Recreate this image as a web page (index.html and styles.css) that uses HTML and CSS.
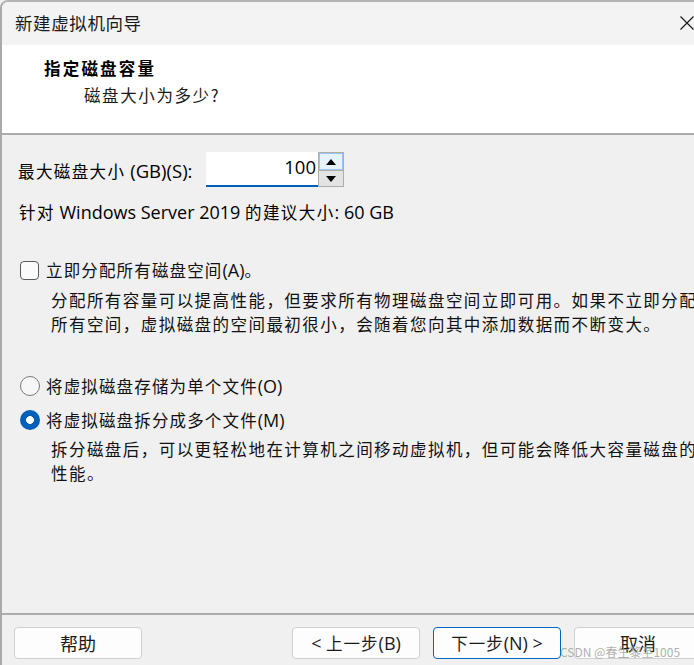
FILE: index.html
```html
<!DOCTYPE html>
<html lang="zh-CN">
<head>
<meta charset="utf-8">
<title>新建虚拟机向导</title>
<link rel="stylesheet" href="styles.css">
</head>
<body>
<div class="window">
  <div class="titlebar">
    <span class="title">新建虚拟机向导</span>
    <svg class="close" width="14" height="14" viewBox="0 0 14 14"><path d="M0.5 0.5 L13.5 13.5 M13.5 0.5 L0.5 13.5" stroke="#1a1a1a" stroke-width="1.2" fill="none"/></svg>
  </div>
  <div class="header">
    <div class="h-title">指定磁盘容量</div>
    <div class="h-sub">磁盘大小为多少?</div>
  </div>
  <div class="content">
    <div class="size-row">
      <span class="size-label"><span class="c">最大磁盘大小</span> (GB)(S):</span>
      <div class="spin">
        <div class="spin-input">100</div>
        <div class="spin-btns">
          <div class="spin-btn up"><svg width="10" height="6" viewBox="0 0 10 6"><path d="M5 0 L10 6 L0 6 Z" fill="#000"/></svg></div>
          <div class="spin-btn down"><svg width="10" height="6" viewBox="0 0 10 6"><path d="M0 0 L10 0 L5 6 Z" fill="#000"/></svg></div>
        </div>
      </div>
    </div>
    <div class="recommend"><span class="c">针对</span> Windows Server 2019 <span class="c">的建议大小</span>: 60 GB</div>
    <div class="check-row">
      <span class="checkbox"></span>
      <span class="opt-label"><span class="c">立即分配所有磁盘空间</span>(A)<span class="c">。</span></span>
    </div>
    <p class="desc first">分配所有容量可以提高性能，但要求所有物理磁盘空间立即可用。如果不立即分配<br>所有空间，虚拟磁盘的空间最初很小，会随着您向其中添加数据而不断变大。</p>
    <div class="radio-row r1">
      <span class="radio"></span>
      <span class="opt-label"><span class="c">将虚拟磁盘存储为单个文件</span>(O)</span>
    </div>
    <div class="radio-row r2">
      <span class="radio checked"></span>
      <span class="opt-label"><span class="c">将虚拟磁盘拆分成多个文件</span>(M)</span>
    </div>
    <p class="desc second">拆分磁盘后，可以更轻松地在计算机之间移动虚拟机，但可能会降低大容量磁盘的<br>性能。</p>
  </div>
  <div class="footer">
    <div class="btn">帮助</div>
    <div class="btn-group">
      <div class="btn">&lt; <span class="c">上一步</span>(B)</div>
      <div class="btn primary"><span class="c">下一步</span>(N) &gt;</div>
      <div class="btn">取消</div>
    </div>
  </div>
  <div class="watermark">CSDN @春生黎至1005</div>
</div>
</body>
</html>
```
FILE: styles.css
```css
html, body {
  margin: 0;
  padding: 0;
  background: #f0f0f0;
  overflow: hidden;
  width: 694px;
  height: 665px;
}
body {
  font-family: "Open Sans", "Noto Sans CJK SC", sans-serif;
  color: #000;
}
.c {
  font-family: "Noto Sans CJK SC", sans-serif;
}
.window {
  position: relative;
  width: 740px;
  height: 665px;
  border-left: 2px solid #a9a9a9;
  border-top: 2px solid #b3b3b3;
  border-top-left-radius: 8px;
  background: #f0f0f0;
  box-sizing: border-box;
  display: flex;
  flex-direction: column;
}
.titlebar {
  height: 43px;
  background: #f3f3f3;
  border-top-left-radius: 6px;
  display: flex;
  align-items: center;
  justify-content: space-between;
  padding: 0 46px 2px 13px;
  box-sizing: border-box;
}
.title {
  font-family: "Noto Sans CJK SC", sans-serif;
  font-size: 17.5px;
  letter-spacing: 0.6px;
  color: #1a1a1a;
}
.close {
  display: block;
}
.header {
  height: 90px;
  flex-shrink: 0;
  background: #fff;
  border-bottom: 2px solid #acacac;
  padding: 11px 0 0 42px;
  box-sizing: border-box;
}
.h-title {
  font-family: "Noto Sans CJK SC", sans-serif;
  font-weight: 700;
  font-size: 16.5px;
  letter-spacing: 2.2px;
  line-height: 24px;
}
.h-sub {
  font-family: "Noto Sans CJK SC", sans-serif;
  font-size: 16.5px;
  letter-spacing: 1.6px;
  line-height: 24px;
  margin: 3px 0 0 40px;
  color: #1a1a1a;
}
.content {
  flex: 1;
  padding: 17px 0 0 16px;
  font-size: 18px;
}
.content .c {
  font-size: 16.5px;
  letter-spacing: 1.4px;
}
.size-row {
  display: flex;
  align-items: center;
  height: 35px;
}
.size-label {
  width: 188px;
  padding-top: 2px;
  white-space: nowrap;
  font-size: 18.5px;
}
.spin {
  display: flex;
  height: 35px;
}
.spin-input {
  width: 112px;
  height: 35px;
  box-sizing: border-box;
  background: #fff;
  border-bottom: 2px solid #005fb8;
  text-align: right;
  padding-right: 2px;
  font-size: 18.5px;
  line-height: 30px;
}
.spin-btns {
  width: 26px;
  display: flex;
  flex-direction: column;
  border: 1px solid #adadad;
  box-sizing: border-box;
  background: #e1e1e1;
}
.spin-btn {
  flex: 1;
  display: flex;
  align-items: center;
  justify-content: center;
}
.spin-btn.up {
  background: #e5f1fb;
  border: 1px solid #9cc6ef;
}
.spin-btn.down {
  background: #e3e3e3;
  border-top: 1px solid #adadad;
}
.recommend {
  margin-top: 13px;
  height: 24px;
  line-height: 24px;
  padding-left: 1px;
  white-space: nowrap;
}
.check-row, .radio-row {
  display: flex;
  align-items: center;
  height: 24px;
}
.check-row {
  margin-top: 34px;
}
.checkbox {
  width: 19px;
  height: 19px;
  box-sizing: border-box;
  border: 1px solid #5a5a5a;
  border-radius: 4px;
  background: #fbfbfb;
  margin: 0 7px 0 2px;
}
.opt-label {
  color: #111;
  white-space: nowrap;
}
.opt-label .c {
  letter-spacing: 1.15px;
}
.desc {
  margin: 0;
  padding-left: 33px;
  font-family: "Noto Sans CJK SC", sans-serif;
  font-size: 16.5px;
  letter-spacing: 1.45px;
  line-height: 23.5px;
  white-space: nowrap;
  color: #111;
}
.desc.first {
  margin-top: 7px;
}
.desc.second {
  margin-top: 6px;
}
.radio-row.r1 {
  margin-top: 38px;
}
.radio-row.r2 {
  margin-top: 10px;
}
.radio {
  width: 20px;
  height: 20px;
  box-sizing: border-box;
  border: 1px solid #7a7a7a;
  border-radius: 50%;
  background: #f7f7f7;
  margin: 0 6px 0 2px;
}
.radio.checked {
  border: none;
  background: radial-gradient(circle, #fff 0 3.6px, #005fb8 4.2px);
}
.footer {
  height: 52px;
  flex-shrink: 0;
  border-top: 2px solid #acacac;
  box-sizing: border-box;
  display: flex;
  align-items: flex-start;
  padding: 12px 0 0 12px;
  gap: 150px;
}
.btn-group {
  display: flex;
  gap: 13px;
}
.btn {
  width: 128px;
  height: 32px;
  box-sizing: border-box;
  border: 1px solid #d0d0d0;
  border-radius: 4px;
  background: #fdfdfd;
  display: flex;
  align-items: center;
  justify-content: center;
  font-family: "Open Sans", "Noto Sans CJK SC", sans-serif;
  font-size: 18px;
  color: #1a1a1a;
  white-space: pre;
}
.btn .c {
  font-size: 16.5px;
  letter-spacing: 1px;
}
.btn.primary {
  border: 1px solid #0067c0;
}
.watermark {
  position: absolute;
  left: 558px;
  top: 641px;
  font-family: "Noto Sans CJK SC", sans-serif;
  font-size: 12px;
  color: rgba(160, 160, 160, 0.85);
  white-space: nowrap;
}
```
